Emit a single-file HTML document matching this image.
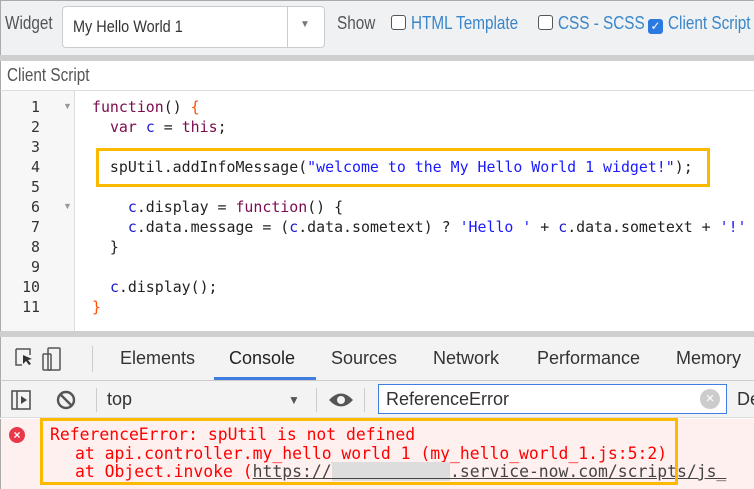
<!DOCTYPE html>
<html><head><meta charset="utf-8"><style>
*{margin:0;padding:0;box-sizing:border-box}
body{width:754px;height:489px;overflow:hidden;background:#fff;font-family:"Liberation Sans",sans-serif;position:relative}
.a{position:absolute}
.mono{font-family:"DejaVu Sans Mono","Liberation Mono",monospace;font-size:14.9px;white-space:pre}
.k{color:#7a0b4e}.v{color:#1a1acc}.s{color:#1a1aff}.o{color:#ff4f00}
.cb{width:15px;height:15px;border:1.5px solid #555;border-radius:3px;display:inline-block;vertical-align:-2px;margin-right:4px;background:#fff}
.cn{transform-origin:0 0;transform:scaleX(0.85);white-space:nowrap;font-size:18px}
</style></head><body>
<div class="a" style="left:0;top:0;width:754px;height:55px;background:#eff1f3;border-left:1px solid #aaa;border-top:1px solid #aaa"></div>
<div class="a cn" style="left:5px;top:13px;color:#555">Widget</div>
<div class="a" style="left:62px;top:6px;width:263px;height:42px;background:#fff;border:1px solid #ccc;border-radius:4px"></div>
<div class="a cn" style="left:73px;top:17px;font-size:17px;color:#333">My Hello World 1</div>
<div class="a" style="left:287px;top:7px;width:1px;height:40px;background:#ccc"></div>
<div class="a" style="left:300px;top:19px;font-size:10px;color:#777">▼</div>
<div class="a cn" style="left:337px;top:13px;color:#555">Show</div>
<div class="a" style="left:391px;top:15px"><span class="cb"></span></div>
<div class="a cn" style="left:411px;top:13px;color:#3a86c8">HTML Template</div>
<div class="a" style="left:538px;top:15px"><span class="cb"></span></div>
<div class="a cn" style="left:558px;top:13px;color:#3a86c8">CSS - SCSS</div>
<div class="a" style="left:648px;top:15px"><span class="cb" style="background:#2a7ae2;border-color:#2a7ae2;color:#fff;font-size:12px;line-height:12px;text-align:center">✓</span></div>
<div class="a cn" style="left:668px;top:13px;color:#3a86c8">Client Script</div>
<div class="a" style="left:0;top:55px;width:754px;height:6px;background:#cfcfcf"></div>
<div class="a" style="left:0;top:61px;width:754px;height:30px;border-left:1px solid #aaa;border-bottom:1px solid #ddd;background:#fff"></div>
<div class="a cn" style="left:7px;top:65px;color:#555">Client Script</div>
<div class="a" style="left:0;top:91px;width:75px;height:240px;background:#f7f7f7;border-right:1px solid #ddd;border-left:1px solid #aaa"></div>
<div class="a mono" style="left:18px;top:97px;line-height:20px;color:#333;text-align:right;width:22px">1
2
3
4
5
6
7
8
9
10
11</div>
<div class="a" style="left:63px;top:101px;font-size:9px;color:#999">▼</div>
<div class="a" style="left:63px;top:201px;font-size:9px;color:#999">▼</div>
<div class="a mono" style="left:92px;top:97px;line-height:20px;color:#222"><span class="k">function</span>() <span class="o">{</span>
  <span class="k">var</span> <span class="v">c</span> = <span class="k">this</span>;

  spUtil.addInfoMessage(<span class="s">"welcome to the My Hello World 1 widget!"</span>);

    <span class="v">c</span>.display = <span class="k">function</span>() {
    <span class="v">c</span>.data.message = (<span class="v">c</span>.data.sometext) ? <span class="s">'Hello '</span> + <span class="v">c</span>.data.sometext + <span class="s">'!'</span>
  }

  <span class="v">c</span>.display();
<span class="o">}</span></div>
<div class="a" style="left:96px;top:148px;width:614px;height:39px;border:3px solid #fbb900"></div>
<div class="a" style="left:0;top:331px;width:754px;height:6px;background:#cfcfcf"></div>
<div class="a" style="left:0;top:337px;width:754px;height:44px;background:#f3f3f3;border-bottom:1px solid #ccc;border-left:1px solid #aaa"></div>
<svg class="a" style="left:12px;top:346px" width="50" height="26"><path d="M4 3h14v6M4 3v16h6" fill="none" stroke="#555" stroke-width="1.5"/><path d="M11 9l9 4-4 1 3 4-2 1-3-4-3 3z" fill="#333"/><rect x="31" y="8" width="8" height="16" rx="1" fill="none" stroke="#555" stroke-width="1.5"/><rect x="36" y="2" width="12" height="22" rx="1" fill="none" stroke="#555" stroke-width="1.5"/></svg>
<div class="a" style="left:92px;top:346px;width:1px;height:26px;background:#ccc"></div>
<div class="a" style="top:348px;left:120px;font-size:18px;color:#333">Elements</div>
<div class="a" style="top:348px;left:229px;font-size:18px;color:#222">Console</div>
<div class="a" style="top:377px;left:214px;width:102px;height:3px;background:#3d7ee0"></div>
<div class="a" style="top:348px;left:331px;font-size:18px;color:#333">Sources</div>
<div class="a" style="top:348px;left:433px;font-size:18px;color:#333">Network</div>
<div class="a" style="top:348px;left:537px;font-size:18px;color:#333">Performance</div>
<div class="a" style="top:348px;left:676px;font-size:18px;color:#333">Memory</div>
<div class="a" style="left:0;top:381px;width:754px;height:37px;background:#f3f3f3;border-bottom:1px solid #ddd;border-left:1px solid #aaa"></div>
<svg class="a" style="left:10px;top:388px" width="70" height="24"><rect x="2" y="3" width="18" height="18" fill="none" stroke="#555" stroke-width="1.6"/><path d="M7 3v18" stroke="#555" stroke-width="1.6"/><path d="M11 8l6 4-6 4z" fill="#444"/><circle cx="56" cy="12" r="8" fill="none" stroke="#555" stroke-width="2.4"/><path d="M50 6l12 12" stroke="#555" stroke-width="2.4"/></svg>
<div class="a" style="left:96px;top:388px;width:1px;height:24px;background:#ccc"></div>
<div class="a" style="left:107px;top:389px;font-size:18px;color:#333">top</div>
<div class="a" style="left:288px;top:393px;font-size:12px;color:#555">▼</div>
<div class="a" style="left:316px;top:388px;width:1px;height:24px;background:#ccc"></div>
<svg class="a" style="left:328px;top:390px" width="26" height="20"><path d="M1 10Q13-3 25 10Q13 23 1 10z" fill="#555"/><circle cx="13" cy="10" r="4" fill="#f3f3f3"/></svg>
<div class="a" style="left:364px;top:388px;width:1px;height:24px;background:#ccc"></div>
<div class="a" style="left:378px;top:384px;width:349px;height:30px;background:#fff;border:1.5px solid #3d7ee0"></div>
<div class="a" style="left:386px;top:389px;font-size:18px;color:#333">ReferenceError</div>
<div class="a" style="left:700px;top:389px;width:20px;height:20px;border-radius:50%;background:#ccc;color:#fff;font-size:15px;text-align:center;line-height:20px">×</div>
<div class="a" style="left:737px;top:389px;font-size:18px;color:#333">De</div>
<div class="a" style="left:0;top:419px;width:754px;height:70px;background:#fff0f0;border-left:1px solid #aaa"></div>
<div class="a" style="left:9px;top:427px;width:16px;height:16px;border-radius:50%;background:#e8394a;color:#fff;font-size:12px;text-align:center;line-height:16px;font-weight:bold">×</div>
<div class="a mono" style="left:50px;top:426px;line-height:18.5px;color:#f00;font-size:16.4px">ReferenceError: spUtil is not defined
<span style="padding-left:25px">at api.controller.my_hello_world_1 (my_hello_world_1.js:5:2)</span>
<span style="padding-left:25px">at Object.invoke (<span style="color:#444;text-decoration:underline">https://<span style="background:#ddd;color:#ddd">xxxxxxxxxxxx</span>.service-now.com/scripts/js_</span></span></div>
<div class="a" style="left:40px;top:418px;width:638px;height:67px;border:3px solid #fbb900"></div>
</body></html>
